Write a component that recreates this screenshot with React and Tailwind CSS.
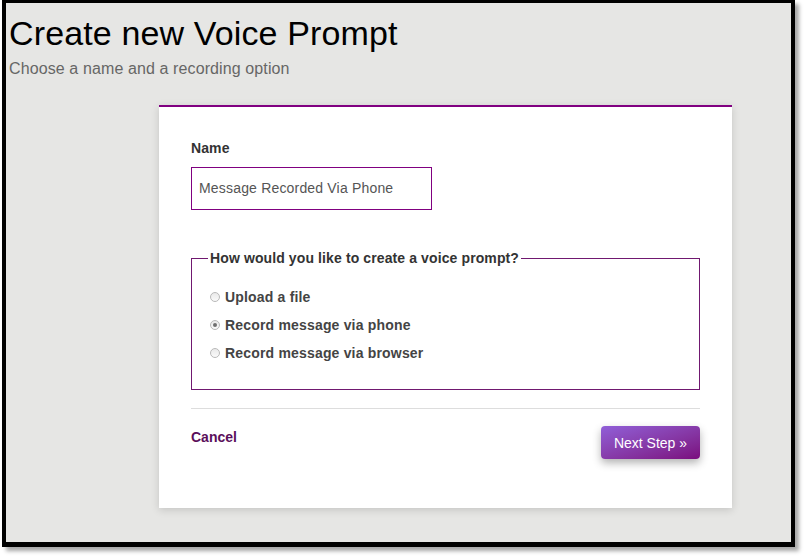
import React from "react";

function Radio({ checked, label }) {
  return (
    <div className="flex items-center h-[20px] leading-[20px]">
      <span className="ml-[2px] w-[10px] h-[10px] rounded-full border border-[#b9b9b9] bg-linear-to-b from-[#e9e9e9] to-[#fafafa] flex items-center justify-center">
        {checked && <span className="w-[4px] h-[4px] rounded-full bg-[#6f6f6f]" />}
      </span>
      <span className="ml-[5px] font-bold text-[14px] tracking-[0.18px] text-[#444]">{label}</span>
    </div>
  );
}

export default function App() {
  return (
    <div className="w-[804px] h-[556px] bg-white overflow-hidden" style={{ fontFamily: '"Liberation Sans", Arial, sans-serif' }}>
      <div className="ml-[2px] w-[793px] h-[547px] border-x-4 border-b-[5px] border-t-[3px] border-black bg-[#e6e6e4] shadow-[4px_4px_4px_rgba(0,0,0,0.35)] pl-[3px]">
        <h1 className="mt-[13px] text-[34px] leading-[34px] tracking-[0.13px] text-black font-normal">Create new Voice Prompt</h1>
        <p className="mt-[11px] text-[16px] leading-[16px] tracking-[0.11px] text-[#666]">Choose a name and a recording option</p>
        <div className="mt-[28px] ml-[150px] w-[573px] bg-white border-t-2 border-[#800080] shadow-[0_2px_8px_rgba(0,0,0,0.15)] px-[32px] pt-[31px] pb-[49px]">
          <div className="font-bold text-[14px] leading-[20px] tracking-[0.1px] text-[#333]">Name</div>
          <div className="mt-[9px] w-[241px] h-[43px] border border-[#800080] flex items-center px-[7px] text-[14px] tracking-[0.18px] text-[#555]">
            Message Recorded Via Phone
          </div>
          <fieldset className="mt-[40px] border border-[#701870] pl-[16px] pr-[16px] pb-[26px] m-0">
            <legend className="px-[2px] font-bold text-[14px] leading-[16px] tracking-[0.11px] text-[#333]">
              How would you like to create a voice prompt?
            </legend>
            <div className="pt-[21px] flex flex-col gap-[8px]">
              <Radio label="Upload a file" />
              <Radio checked label="Record message via phone" />
              <Radio label="Record message via browser" />
            </div>
          </fieldset>
          <div className="mt-[18px] h-px bg-[#dddddd]" />
          <div className="mt-[17px] flex items-start justify-between">
            <span className="pt-[1px] font-bold text-[14px] leading-[20px] text-[#5b0f5b]">Cancel</span>
            <button className="w-[99px] h-[33px] rounded-[4px] bg-linear-to-br from-[#905fd8] to-[#7a0a7e] text-white text-[14px] leading-[20px] shadow-[0_4px_8px_rgba(0,0,0,0.3)] flex items-center justify-center">
              Next Step »
            </button>
          </div>
        </div>
      </div>
    </div>
  );
}
